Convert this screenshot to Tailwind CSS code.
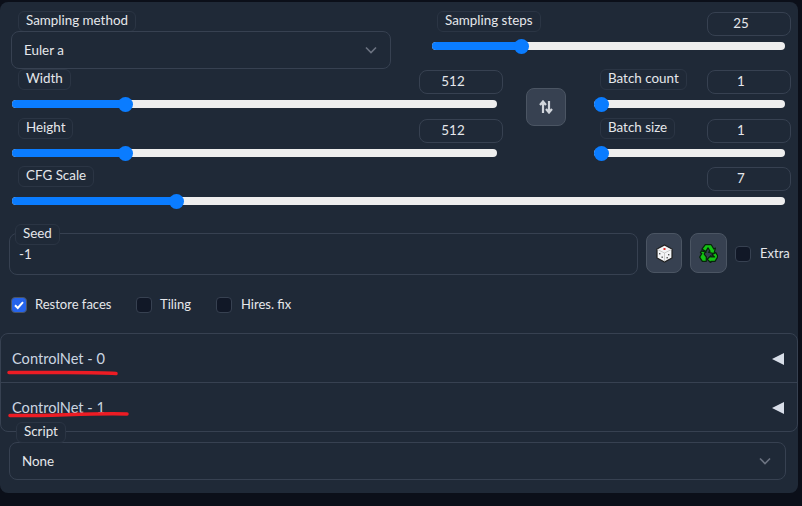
<!DOCTYPE html>
<html lang="en">
<head>
<meta charset="UTF-8">
<title>txt2img settings</title>
<script src="https://cdn.jsdelivr.net/npm/@tailwindcss/browser@4"></script>
</head>
<body class="bg-[#0b0f19] font-['Lato',sans-serif] text-[13.4px] text-[#e5e7eb] w-[802px] h-[506px] overflow-hidden">
<div class="relative mt-[2px] w-[798px] h-[491px] pt-[9px] bg-[#1f2937] rounded-lg overflow-hidden">

  <!-- sampling row -->
  <div class="flex h-[58px] pl-[11px]">
    <div class="w-[380px]">
      <div class="ml-[7px] w-fit h-[21px] px-[7px] pb-[2px] flex items-center border border-[#2b3544] rounded-md">Sampling method</div>
      <div class="h-[38px] -mt-px flex items-center justify-between pl-[12px] pr-[12px] border border-[#374151] rounded-lg">
        <span>Euler a</span>
        <svg class="w-[14px] h-[14px] text-[#6b7280]" viewBox="0 0 14 14" fill="none" stroke="currentColor" stroke-width="1.6"><path d="M2 4.5l5 5 5-5"/></svg>
      </div>
    </div>
    <div class="ml-[40px] w-[360px]">
      <div class="flex justify-between h-[25px]">
        <div class="ml-[6px] h-[21px] px-[7px] pb-[2px] flex items-center border border-[#2b3544] rounded-md">Sampling steps</div>
        <div class="w-[84px] h-[24px] mt-px pr-[16px] pb-px flex items-center justify-center border border-[#374151] rounded-lg">25</div>
      </div>
      <div class="relative mt-[2px] ml-px mr-[6px] h-[16px] flex items-center">
        <div class="w-full h-[8px] rounded-full bg-[#eeeeee]"><div class="w-[89px] h-full rounded-l-full bg-[#0a7cff]"></div></div>
        <div class="absolute left-[82px] w-[15px] h-[15px] rounded-full bg-[#0a7cff]"></div>
      </div>
    </div>
  </div>

  <!-- width / height / batch -->
  <div class="flex pl-[11px]">
    <div class="w-[492px]">
      <div class="h-[49px]">
        <div class="flex justify-between h-[25px]">
          <div class="ml-[7px] h-[21px] px-[7px] pb-[2px] flex items-center border border-[#2b3544] rounded-md">Width</div>
          <div class="w-[84px] h-[24px] mt-px pr-[16px] pb-px flex items-center justify-center border border-[#374151] rounded-lg">512</div>
        </div>
        <div class="relative mt-[2px] ml-px mr-[6px] h-[16px] flex items-center">
          <div class="w-full h-[8px] rounded-full bg-[#eeeeee]"><div class="w-[113px] h-full rounded-l-full bg-[#0a7cff]"></div></div>
          <div class="absolute left-[106px] w-[15px] h-[15px] rounded-full bg-[#0a7cff]"></div>
        </div>
      </div>
      <div class="h-[48px]">
        <div class="flex justify-between h-[25px]">
          <div class="ml-[7px] h-[21px] px-[7px] pb-[2px] flex items-center border border-[#2b3544] rounded-md">Height</div>
          <div class="w-[84px] h-[24px] mt-px pr-[16px] pb-px flex items-center justify-center border border-[#374151] rounded-lg">512</div>
        </div>
        <div class="relative mt-[2px] ml-px mr-[6px] h-[16px] flex items-center">
          <div class="w-full h-[8px] rounded-full bg-[#eeeeee]"><div class="w-[113px] h-full rounded-l-full bg-[#0a7cff]"></div></div>
          <div class="absolute left-[106px] w-[15px] h-[15px] rounded-full bg-[#0a7cff]"></div>
        </div>
      </div>
    </div>
    <div class="ml-[23px] mt-[19px] w-[40px] h-[38px] flex items-center justify-center bg-[#374151] border border-[#4b5563] rounded-lg">
      <svg class="w-[14px] h-[14px] text-[#d1d5db]" viewBox="0 0 14 14" fill="none" stroke="currentColor" stroke-width="2.2"><path d="M4 13V2M1 5l3-3.5L7 5M10 1v11M7 9l3 3.5L13 9"/></svg>
    </div>
    <div class="ml-[27px] w-[198px]">
      <div class="h-[49px]">
        <div class="flex justify-between h-[25px]">
          <div class="ml-[7px] h-[21px] px-[7px] pb-[2px] flex items-center border border-[#2b3544] rounded-md">Batch count</div>
          <div class="w-[84px] h-[24px] mt-px pr-[16px] pb-px flex items-center justify-center border border-[#374151] rounded-lg">1</div>
        </div>
        <div class="relative mt-[2px] ml-px mr-[6px] h-[16px] flex items-center">
          <div class="w-full h-[8px] rounded-full bg-[#eeeeee]"></div>
          <div class="absolute left-0 w-[15px] h-[15px] rounded-full bg-[#0a7cff]"></div>
        </div>
      </div>
      <div class="h-[48px]">
        <div class="flex justify-between h-[25px]">
          <div class="ml-[7px] h-[21px] px-[7px] pb-[2px] flex items-center border border-[#2b3544] rounded-md">Batch size</div>
          <div class="w-[84px] h-[24px] mt-px pr-[16px] pb-px flex items-center justify-center border border-[#374151] rounded-lg">1</div>
        </div>
        <div class="relative mt-[2px] ml-px mr-[6px] h-[16px] flex items-center">
          <div class="w-full h-[8px] rounded-full bg-[#eeeeee]"></div>
          <div class="absolute left-0 w-[15px] h-[15px] rounded-full bg-[#0a7cff]"></div>
        </div>
      </div>
    </div>
  </div>

  <!-- cfg -->
  <div class="ml-[11px] w-[780px] h-[49px]">
    <div class="flex justify-between h-[25px]">
      <div class="ml-[7px] h-[21px] px-[7px] pb-[2px] flex items-center border border-[#2b3544] rounded-md">CFG Scale</div>
      <div class="w-[84px] h-[24px] mt-px pr-[16px] pb-px flex items-center justify-center border border-[#374151] rounded-lg">7</div>
    </div>
    <div class="relative mt-[2px] ml-px mr-[6px] h-[16px] flex items-center">
      <div class="w-full h-[8px] rounded-full bg-[#eeeeee]"><div class="w-[164px] h-full rounded-l-full bg-[#0a7cff]"></div></div>
      <div class="absolute left-[157px] w-[15px] h-[15px] rounded-full bg-[#0a7cff]"></div>
    </div>
  </div>

  <!-- seed -->
  <div class="flex mt-[18px] pl-[9px] h-[42px]">
    <div class="relative w-[629px] h-[42px] pl-[9px] pt-[10px] border border-[#374151] rounded-lg">
      <span class="absolute left-[5px] -top-[10px] h-[21px] px-[7px] pb-[2px] flex items-center bg-[#1f2937] border border-[#2b3544] rounded-md">Seed</span>
      <span>-1</span>
    </div>
    <button class="ml-[8px] w-[36px] h-[40px] flex items-center justify-center bg-[#374151] border border-[#4b5563] rounded-lg">
      <svg class="w-[17px] h-[19px]" viewBox="0 0 17 19">
        <path d="M8.5 1L16 5v9l-7.5 4L1 14V5z" fill="#f3f4f6" stroke="#1f1f1f" stroke-width="1.2"/>
        <path d="M1.5 5.5l7 3.5 7-3.5M8.5 9v8.5" fill="none" stroke="#b9b9b9" stroke-width=".7"/>
        <rect x="7.5" y="4" width="2" height="2" fill="#e0332f"/>
        <g fill="#555"><rect x="3" y="9" width="1.4" height="1.4"/><rect x="5.5" y="12.5" width="1.4" height="1.4"/><rect x="12" y="10" width="1.4" height="1.4"/><rect x="10.5" y="13" width="1.4" height="1.4"/></g>
      </svg>
    </button>
    <button class="ml-[8px] w-[37px] h-[40px] flex items-center justify-center bg-[#374151] border border-[#4b5563] rounded-lg">
      <svg class="w-[19px] h-[20px]" viewBox="0 0 24 24" fill="#14c414" stroke="#06240a" stroke-width="1.5" stroke-linejoin="round">
        <path d="M8 1.5h7.5l3.2 5.5 2.1-1.2-1.9 7-7-1.8 2.1-1.2-2.6-4.4-2.7 4.6-5-2.9z"/>
        <path d="M21.2 11.5l2.3 4-.4 2.4-2.9 4.6H15v2l-4.6-4.6 4.6-4.6V17h4.7l-3.2-2.8z"/>
        <path d="M3 9.4l6 1.6-1.8 1-.6 1.4 2.6 3.6v5.5H4.2L.8 17.2l2.8-4.6-1.8-1z"/>
      </svg>
    </button>
    <div class="ml-[8px] mt-[13px] w-[16px] h-[16px] bg-[#111827] border border-[#374151] rounded"></div>
    <span class="ml-[9px] mt-[11px] text-[13px]">Extra</span>
  </div>

  <!-- checkboxes -->
  <div class="flex items-center mt-[22px] pl-[11px] h-[16px] text-[13px]">
    <div class="w-[16px] h-[16px] flex items-center justify-center bg-[#2563eb] border border-[#4b5563] rounded">
      <svg class="w-[12px] h-[12px]" viewBox="0 0 12 12" fill="none" stroke="white" stroke-width="2"><path d="M2 6.2l2.8 2.8L10 3.2"/></svg>
    </div>
    <span class="ml-[8px] w-[101px]">Restore faces</span>
    <div class="w-[16px] h-[16px] bg-[#111827] border border-[#374151] rounded"></div>
    <span class="ml-[8px] w-[56px]">Tiling</span>
    <div class="w-[16px] h-[16px] bg-[#111827] border border-[#374151] rounded"></div>
    <span class="ml-[9px]">Hires. fix</span>
  </div>

  <!-- accordions -->
  <div class="mt-[20px] w-[798px] h-[99px] border border-[#374151] rounded-lg">
    <div class="h-[49px] flex items-center justify-between pl-[11px] pr-[13px] pt-[2px] border-b border-[#374151] text-[14.6px] text-[#cbd5e1]">
      <span>ControlNet - 0</span>
      <span class="w-0 h-0 border-y-[6px] border-y-transparent border-r-[12px] border-r-[#d8dee8]"></span>
    </div>
    <div class="h-[48px] flex items-center justify-between pl-[11px] pr-[13px] pt-[2px] text-[14.6px] text-[#cbd5e1]">
      <span>ControlNet - 1</span>
      <span class="w-0 h-0 border-y-[6px] border-y-transparent border-r-[12px] border-r-[#d8dee8]"></span>
    </div>
  </div>

  <!-- script -->
  <div class="relative -mt-[10px] ml-[16px] w-fit h-[21px] px-[7px] pb-[2px] flex items-center bg-[#1f2937] border border-[#2b3544] rounded-md">Script</div>
  <div class="ml-[9px] -mt-px w-[777px] h-[38px] flex items-center justify-between pl-[12px] pr-[13px] border border-[#374151] rounded-lg">
    <span>None</span>
    <svg class="w-[14px] h-[14px] text-[#6b7280]" viewBox="0 0 14 14" fill="none" stroke="currentColor" stroke-width="1.6"><path d="M2 4.5l5 5 5-5"/></svg>
  </div>

  <!-- red marker strokes drawn over the screenshot -->
  <svg class="absolute left-0 top-0 w-[798px] h-[491px] pointer-events-none" viewBox="0 0 798 491" fill="none" stroke="#ed1c24" stroke-width="3.5" stroke-linecap="round">
    <path d="M9 370.5C40 371 90 369.5 116 371.5"/>
    <path d="M10 413.5C50 414 90 411 127 412"/>
  </svg>
</div>
</body>
</html>
